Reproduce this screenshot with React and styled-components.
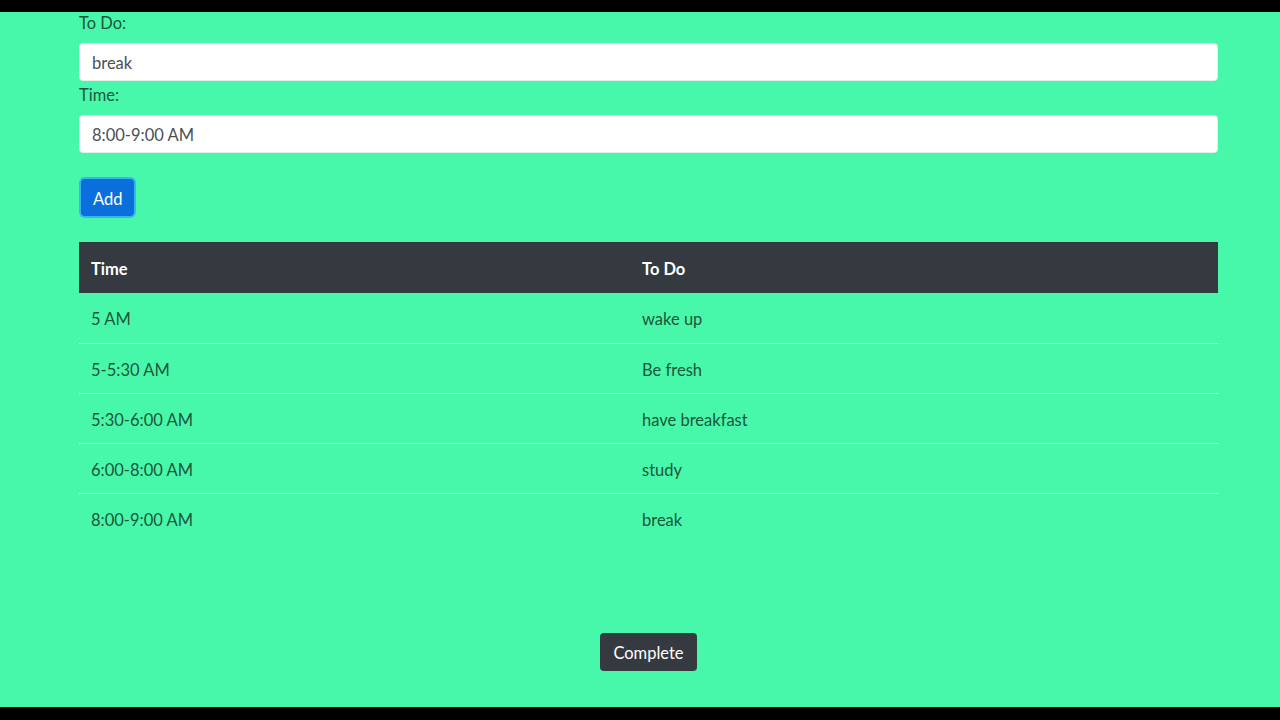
import React, { useState } from 'react';
import styled, { createGlobalStyle } from 'styled-components';

const GlobalStyle = createGlobalStyle`
  html, body {
    margin: 0;
    padding: 0;
    background: #000;
  }
  body {
    font-family: Lato, "Noto Sans", "Liberation Sans", sans-serif;
    font-size: 16.5px;
    line-height: 1.5;
  }
`;

const Page = styled.div`
  display: flex;
  flex-direction: column;
  width: 1280px;
  height: 720px;
  overflow: hidden;
`;

const Bar = styled.div`
  height: ${(p) => p.h}px;
  background: #000;
  flex-shrink: 0;
`;

const Stage = styled.main`
  flex: 1;
  background: #48f8aa;
  display: flex;
  padding-left: 79px;
`;

const Container = styled.div`
  width: 1139px;
  display: flex;
  flex-direction: column;
`;

const Form = styled.form`
  display: flex;
  flex-direction: column;
`;

const Label = styled.label`
  color: #1d553b;
  line-height: 22px;
  margin: ${(p) => (p.first ? '0' : '3px')} 0 9px;
`;

const Input = styled.input`
  height: 38px;
  box-sizing: border-box;
  border: 1px solid #e3efe8;
  border-radius: 4px;
  background: #fff;
  padding: 2px 12px 0;
  font: inherit;
  color: #495057;
  outline: none;
`;

const AddButton = styled.button`
  align-self: flex-start;
  margin: 26px 0 0 2px;
  height: 37px;
  padding: 3px 12px 0;
  border: none;
  border-radius: 4px;
  background: #0a6fdc;
  color: #fff;
  font: inherit;
  box-shadow: 0 0 0 2px #3bb3f0;
  cursor: pointer;
`;

const Table = styled.table`
  margin-top: 26px;
  width: 100%;
  border-collapse: collapse;
  table-layout: fixed;
  color: #1d553b;
`;

const HeadCell = styled.th`
  background: #343a40;
  color: #fff;
  font-weight: 700;
  text-align: left;
  padding: 4px 12px 0;
  height: 51px;
  width: ${(p) => p.w || 'auto'};
  box-sizing: border-box;
`;

const Row = styled.tr`
  & + & td {
    border-top: 1px solid #b4f7d6;
  }
`;

const Cell = styled.td`
  padding: 4px 12px 0;
  height: 50px;
  box-sizing: border-box;
`;

const Footer = styled.div`
  display: flex;
  justify-content: center;
  margin-top: 90px;
`;

const CompleteButton = styled.button`
  height: 38px;
  padding: 3px 13px 0;
  border: none;
  border-radius: 4px;
  background: #343a40;
  color: #fff;
  font: inherit;
  cursor: pointer;
`;

const initial = [
  { time: '5 AM', todo: 'wake up' },
  { time: '5-5:30 AM', todo: 'Be fresh' },
  { time: '5:30-6:00 AM', todo: 'have breakfast' },
  { time: '6:00-8:00 AM', todo: 'study' },
  { time: '8:00-9:00 AM', todo: 'break' },
];

export default function App() {
  const [todo, setTodo] = useState('break');
  const [time, setTime] = useState('8:00-9:00 AM');
  const [items, setItems] = useState(initial);

  const add = (e) => {
    e.preventDefault();
    setItems([...items, { time, todo }]);
  };

  return (
    <Page>
      <GlobalStyle />
      <Bar h={12} />
      <Stage>
        <Container>
          <Form onSubmit={add}>
            <Label first>To Do:</Label>
            <Input value={todo} onChange={(e) => setTodo(e.target.value)} />
            <Label>Time:</Label>
            <Input value={time} onChange={(e) => setTime(e.target.value)} />
            <AddButton type="submit">Add</AddButton>
          </Form>
          <Table>
            <thead>
              <tr>
                <HeadCell w="551px">Time</HeadCell>
                <HeadCell>To Do</HeadCell>
              </tr>
            </thead>
            <tbody>
              {items.map((item, i) => (
                <Row key={i}>
                  <Cell>{item.time}</Cell>
                  <Cell>{item.todo}</Cell>
                </Row>
              ))}
            </tbody>
          </Table>
          <Footer>
            <CompleteButton>Complete</CompleteButton>
          </Footer>
        </Container>
      </Stage>
      <Bar h={13} />
    </Page>
  );
}
